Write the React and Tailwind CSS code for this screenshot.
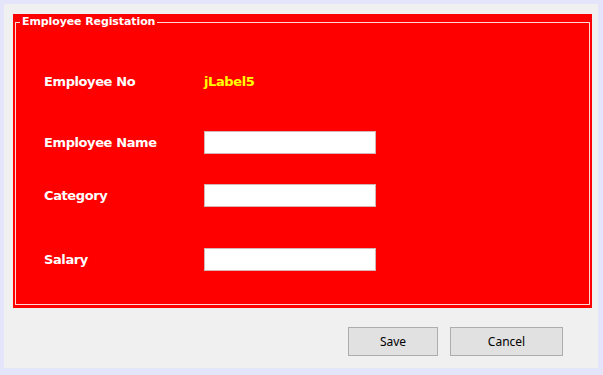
import React from 'react';

const labelCls = "w-[160px] text-white font-bold text-[13px] tracking-[-0.4px] leading-none";
const fieldCls = "w-[172px] h-[23px] bg-white border border-[#d6b4b4] outline-none px-1 text-[12px]";

const Row = ({ label, children, className }) => (
  <div className={"flex items-center h-[23px] " + className}>
    <span className={labelCls}>{label}</span>
    {children}
  </div>
);

export default function App() {
  return (
    <div className="w-[603px] h-[375px] bg-[#e4e4fa] pt-[4px] pl-[4px] pr-[5px] pb-[7px]" style={{ fontFamily: '"DejaVu Sans", Verdana, sans-serif' }}>
      <div className="h-full bg-[#f0f0f0] pt-[10px] pl-[9px]">
        {/* red panel with titled border */}
        <div className="w-[579px] h-[294px] bg-[#ff0000] px-[2px] pt-[1px] pb-[3px]">
          <fieldset className="h-full border border-[#ffd8d8]">
            <legend className="ml-[4px] px-[2px] text-white font-bold text-[11px] tracking-[-0.1px] leading-[14px]">Employee Registation</legend>
            <div className="pl-[28px]">
              <Row label="Employee No" className="mt-[41px]">
                <span className="text-[#ffff00] font-bold text-[13px] tracking-[-0.4px]">jLabel5</span>
              </Row>
              <Row label="Employee Name" className="mt-[38px]">
                <input type="text" className={fieldCls} />
              </Row>
              <Row label="Category" className="mt-[30px]">
                <input type="text" className={fieldCls} />
              </Row>
              <Row label="Salary" className="mt-[41px]">
                <input type="text" className={fieldCls} />
              </Row>
            </div>
          </fieldset>
        </div>

        <div className="flex justify-end gap-[12px] pr-[35px] mt-[19px]" style={{ fontFamily: '"Noto Sans", "Open Sans", sans-serif' }}>
          <button className="w-[90px] h-[29px] bg-[#e1e1e1] border border-[#adadad] text-[12px] text-black">Save</button>
          <button className="w-[113px] h-[29px] bg-[#e1e1e1] border border-[#adadad] text-[12px] text-black">Cancel</button>
        </div>
      </div>
    </div>
  );
}
